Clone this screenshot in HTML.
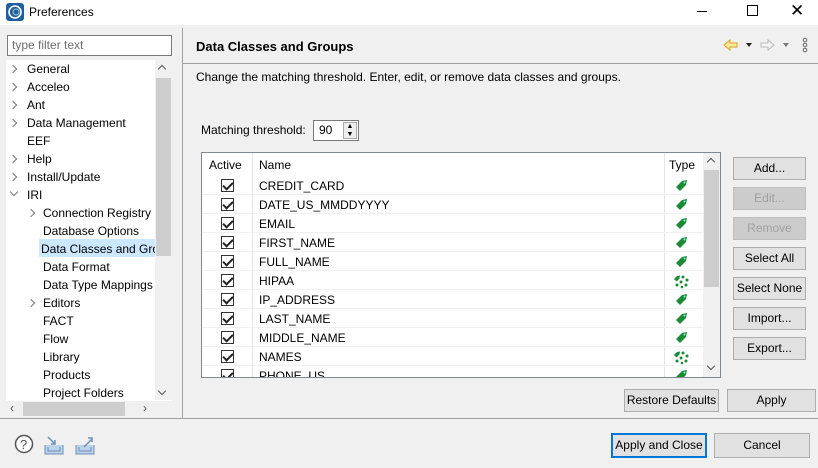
<!DOCTYPE html>
<html><head><style>
*{margin:0;padding:0;box-sizing:border-box}
body{width:818px;height:468px;background:#f0f0f0;font-family:"Liberation Sans",sans-serif;font-size:12px;color:#000;position:relative;overflow:hidden}
.a{position:absolute}
.btn{position:absolute;background:#e1e1e1;border:1px solid #adadad;text-align:center;line-height:20px;font-size:12px}
.dis{color:#a0a0a0;background:#ccc;border-color:#bfbfbf}
.ti{position:absolute;font-size:12px;white-space:nowrap}
.chev{position:absolute;width:6px;height:6px;border-right:1px solid #777;border-bottom:1px solid #777;transform:rotate(-45deg)}
.row{position:absolute;left:202px;width:501px;height:19px;border-bottom:1px solid #f0f0f0}
.cb{position:absolute;left:19px;top:3px;width:13px;height:13px;border:1px solid #333;background:#fff}
.cb:after{content:"";position:absolute;left:3px;top:0px;width:4px;height:8px;border-right:2px solid #222;border-bottom:2px solid #222;transform:rotate(45deg)}
.nm{position:absolute;left:57px;top:3px}
.tg{position:absolute;left:471px;top:2px}
</style></head><body>
<svg width="0" height="0" style="position:absolute"><defs>
<symbol id="t" viewBox="0 0 16 16"><path d="M3 9L9 3L14 2L13 7L7 13Z" fill="#1a8a36"/><circle cx="11.5" cy="4.5" r="1" fill="#8fd"/></symbol>
<symbol id="g" viewBox="0 0 18 16"><path d="M2 6L5 3L8 2.5L7.5 5.5L4.5 8.5Z" fill="#1a8a36"/><circle cx="11" cy="4" r="1.5" fill="#1a8a36"/><circle cx="15" cy="7" r="1.5" fill="#1a8a36"/><circle cx="9" cy="9" r="1.5" fill="#1a8a36"/><circle cx="5" cy="12" r="1.5" fill="#1a8a36"/><circle cx="14" cy="12" r="1.5" fill="#1a8a36"/><circle cx="10" cy="14" r="1.3" fill="#1a8a36"/></symbol>
</defs></svg>
<div class="a" style="left:0;top:0;width:818px;height:25px;background:#fff"></div>
<svg class="a" style="left:6px;top:3px" width="18" height="18"><rect width="18" height="18" rx="3" fill="#1f5f9e"/><circle cx="9" cy="9" r="6" fill="none" stroke="#fff" stroke-width="1.6"/><circle cx="10" cy="9" r="3" fill="none" stroke="#9cc" stroke-width="1"/></svg>
<div class="a" style="left:29px;top:5px;font-size:12px">Preferences</div>
<div class="a" style="left:697px;top:11px;width:10px;height:1px;background:#000"></div>
<div class="a" style="left:747px;top:5px;width:11px;height:11px;border:1px solid #000"></div>
<div class="a" style="left:790px;top:1px;font-size:17px">✕</div>

<div class="a" style="left:7px;top:35px;width:165px;height:21px;background:#fff;border:1px solid #7a7a7a"></div>
<div class="a" style="left:12px;top:38px;color:#6d6d6d">type filter text</div>
<div class="a" style="left:6px;top:60px;width:166px;height:357px;background:#fff"></div>
<div class="a" style="left:155px;top:60px;width:17px;height:340px;background:#f0f0f0"></div>
<div class="a" style="left:156px;top:78px;width:15px;height:178px;background:#cdcdcd"></div>
<div class="a" style="left:159px;top:66px;width:6px;height:6px;border-left:1px solid #555;border-top:1px solid #555;transform:rotate(45deg)"></div>
<div class="a" style="left:159px;top:388px;width:6px;height:6px;border-right:1px solid #555;border-bottom:1px solid #555;transform:rotate(45deg)"></div>
<div class="a" style="left:6px;top:401px;width:166px;height:16px;background:#f0f0f0"></div>
<div class="a" style="left:23px;top:402px;width:102px;height:14px;background:#cdcdcd"></div>
<div class="a" style="left:10px;top:401px;color:#555">‹</div>
<div class="a" style="left:143px;top:401px;color:#555">›</div>
<div class="a" style="left:39px;top:239px;width:116px;height:18px;background:#cce8ff"></div>
<div class="chev" style="left:10px;top:66px"></div><div class="ti" style="left:27px;top:62px">General</div>
<div class="chev" style="left:10px;top:84px"></div><div class="ti" style="left:27px;top:80px">Acceleo</div>
<div class="chev" style="left:10px;top:102px"></div><div class="ti" style="left:27px;top:98px">Ant</div>
<div class="chev" style="left:10px;top:120px"></div><div class="ti" style="left:27px;top:116px">Data Management</div>
<div class="ti" style="left:27px;top:134px">EEF</div>
<div class="chev" style="left:10px;top:156px"></div><div class="ti" style="left:27px;top:152px">Help</div>
<div class="chev" style="left:10px;top:174px"></div><div class="ti" style="left:27px;top:170px">Install/Update</div>
<div class="chev" style="left:11px;top:189px;transform:rotate(45deg)"></div><div class="ti" style="left:27px;top:188px">IRI</div>
<div class="chev" style="left:28px;top:210px"></div><div class="ti" style="left:43px;top:206px">Connection Registry</div>
<div class="ti" style="left:43px;top:224px">Database Options</div>
<div class="ti" style="left:41px;top:242px;width:114px;overflow:hidden">Data Classes and Groups</div>
<div class="ti" style="left:43px;top:260px">Data Format</div>
<div class="ti" style="left:43px;top:278px">Data Type Mappings</div>
<div class="chev" style="left:28px;top:300px"></div><div class="ti" style="left:43px;top:296px">Editors</div>
<div class="ti" style="left:43px;top:314px">FACT</div>
<div class="ti" style="left:43px;top:332px">Flow</div>
<div class="ti" style="left:43px;top:350px">Library</div>
<div class="ti" style="left:43px;top:368px">Products</div>
<div class="ti" style="left:43px;top:386px">Project Folders</div>
<div class="a" style="left:182px;top:28px;width:1px;height:390px;background:#a0a0a0"></div>

<div class="a" style="left:196px;top:39px;font-weight:bold;font-size:13px">Data Classes and Groups</div>
<div class="a" style="left:183px;top:63px;width:635px;height:1px;background:#a0a0a0"></div>
<svg class="a" style="left:722px;top:37px" width="96" height="16">
<path d="M2 8L8 3V6H15V10H8V13Z" fill="#fbe7a0" stroke="#d9a520"/><path d="M24 6h6l-3 4z" fill="#222"/>
<path d="M52 8L46 3V6H39V10H46V13Z" fill="#f4f4f4" stroke="#bbb"/><path d="M61 6h6l-3 4z" fill="#777"/>
<circle cx="83" cy="3" r="1.8" fill="none" stroke="#666"/><circle cx="83" cy="8" r="1.8" fill="none" stroke="#666"/><circle cx="83" cy="13" r="1.8" fill="none" stroke="#666"/>
</svg>
<div class="a" style="left:196px;top:70px">Change the matching threshold. Enter, edit, or remove data classes and groups.</div>
<div class="a" style="left:201px;top:123px">Matching threshold:</div>
<div class="a" style="left:313px;top:120px;width:46px;height:21px;background:#fff;border:1px solid #7a7a7a"></div>
<div class="a" style="left:319px;top:123px">90</div>
<div class="a" style="left:343px;top:122px;width:14px;height:17px;border:1px solid #aaa;background:#eee;font-size:7px;line-height:8px;text-align:center">▲<br>▼</div>

<div class="a" style="left:201px;top:152px;width:520px;height:226px;background:#fff;border:1px solid #828790;overflow:hidden"></div>
<div class="a" style="left:209px;top:158px">Active</div>
<div class="a" style="left:259px;top:158px">Name</div>
<div class="a" style="left:669px;top:158px">Type</div>
<div class="a" style="left:252px;top:153px;width:1px;height:224px;background:#e5e5e5"></div>
<div class="a" style="left:664px;top:153px;width:1px;height:224px;background:#e5e5e5"></div>
<div class="a" style="left:703px;top:153px;width:17px;height:224px;background:#f0f0f0"></div>
<div class="a" style="left:704px;top:170px;width:15px;height:117px;background:#cdcdcd"></div>
<div class="a" style="left:708px;top:159px;width:6px;height:6px;border-left:1px solid #555;border-top:1px solid #555;transform:rotate(45deg)"></div>
<div class="a" style="left:708px;top:363px;width:6px;height:6px;border-right:1px solid #555;border-bottom:1px solid #555;transform:rotate(45deg)"></div>
<div style="position:absolute;left:0;top:0;width:703px;height:377px;overflow:hidden">
<div class="row" style="top:176px"><div class="cb"></div><div class="nm">CREDIT_CARD</div><svg class="tg" width="16" height="16"><use href="#t"/></svg></div>
<div class="row" style="top:195px"><div class="cb"></div><div class="nm">DATE_US_MMDDYYYY</div><svg class="tg" width="16" height="16"><use href="#t"/></svg></div>
<div class="row" style="top:214px"><div class="cb"></div><div class="nm">EMAIL</div><svg class="tg" width="16" height="16"><use href="#t"/></svg></div>
<div class="row" style="top:233px"><div class="cb"></div><div class="nm">FIRST_NAME</div><svg class="tg" width="16" height="16"><use href="#t"/></svg></div>
<div class="row" style="top:252px"><div class="cb"></div><div class="nm">FULL_NAME</div><svg class="tg" width="16" height="16"><use href="#t"/></svg></div>
<div class="row" style="top:271px"><div class="cb"></div><div class="nm">HIPAA</div><svg class="tg" style="left:470px" width="18" height="16"><use href="#g"/></svg></div>
<div class="row" style="top:290px"><div class="cb"></div><div class="nm">IP_ADDRESS</div><svg class="tg" width="16" height="16"><use href="#t"/></svg></div>
<div class="row" style="top:309px"><div class="cb"></div><div class="nm">LAST_NAME</div><svg class="tg" width="16" height="16"><use href="#t"/></svg></div>
<div class="row" style="top:328px"><div class="cb"></div><div class="nm">MIDDLE_NAME</div><svg class="tg" width="16" height="16"><use href="#t"/></svg></div>
<div class="row" style="top:347px"><div class="cb"></div><div class="nm">NAMES</div><svg class="tg" style="left:470px" width="18" height="16"><use href="#g"/></svg></div>
<div class="row" style="top:366px"><div class="cb"></div><div class="nm">PHONE_US</div><svg class="tg" width="16" height="16"><use href="#t"/></svg></div>
</div>

<div class="btn" style="left:733px;top:157px;width:73px;height:23px">Add...</div>
<div class="btn dis" style="left:733px;top:187px;width:73px;height:23px">Edit...</div>
<div class="btn dis" style="left:733px;top:217px;width:73px;height:23px">Remove</div>
<div class="btn" style="left:733px;top:247px;width:73px;height:23px">Select All</div>
<div class="btn" style="left:733px;top:277px;width:73px;height:23px">Select None</div>
<div class="btn" style="left:733px;top:307px;width:73px;height:23px">Import...</div>
<div class="btn" style="left:733px;top:337px;width:73px;height:23px">Export...</div>
<div class="btn" style="left:624px;top:389px;width:95px;height:23px">Restore Defaults</div>
<div class="btn" style="left:727px;top:389px;width:89px;height:23px">Apply</div>

<div class="a" style="left:0;top:418px;width:818px;height:1px;background:#a0a0a0"></div>
<svg class="a" style="left:14px;top:433px" width="90" height="24">
<circle cx="10" cy="11" r="8.5" fill="#fff" stroke="#555" stroke-width="1.5"/><text x="6" y="16" font-size="13" font-family="Liberation Sans" fill="#555">?</text>
<path d="M31 12v9h18v-9M34 14v4h12v-4" fill="#bcd3ea" stroke="#6b8fb8"/><path d="M34 4l7 7M41 7v4h-4" fill="none" stroke="#6b8fb8" stroke-width="1.5"/>
<path d="M62 12v9h18v-9M65 14v4h12v-4" fill="#bcd3ea" stroke="#6b8fb8"/><path d="M70 14l8-8M74 5h4v4" fill="none" stroke="#6b8fb8" stroke-width="1.5"/>
</svg>
<div class="btn" style="left:611px;top:433px;width:96px;height:25px;border:2px solid #0078d7;line-height:21px">Apply and Close</div>
<div class="btn" style="left:714px;top:433px;width:96px;height:25px;line-height:23px">Cancel</div>
</body></html>
